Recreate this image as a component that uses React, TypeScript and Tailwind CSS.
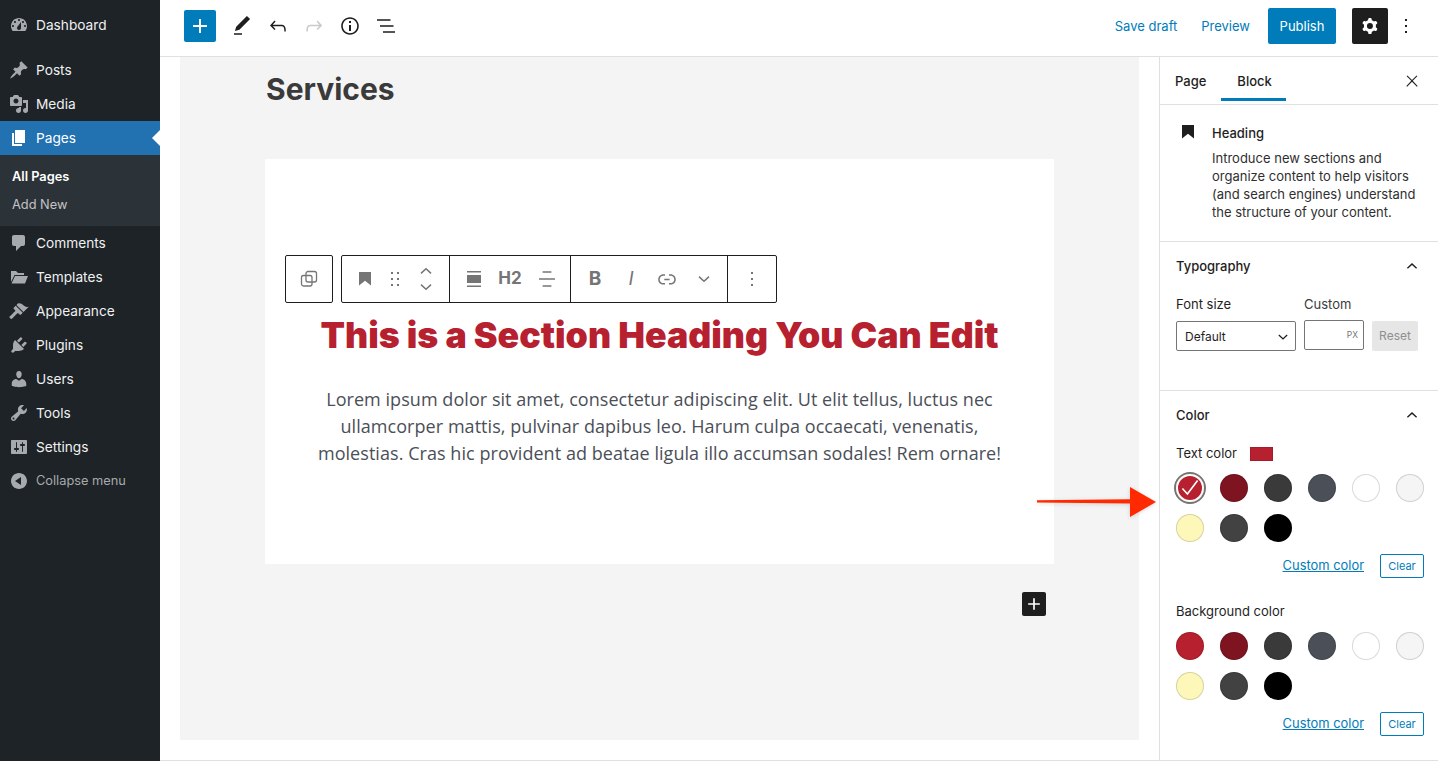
const menuIcons = {
  dashboard: "M3.76 16h12.48c1.1-1.37 1.76-3.11 1.76-5 0-4.42-3.58-8-8-8s-8 3.58-8 8c0 1.89.66 3.63 1.76 5zM10 4c.55 0 1 .45 1 1s-.45 1-1 1-1-.45-1-1 .45-1 1-1zM6 6c.55 0 1 .45 1 1s-.45 1-1 1-1-.45-1-1 .45-1 1-1zm8 0c.55 0 1 .45 1 1s-.45 1-1 1-1-.45-1-1 .45-1 1-1zm-5.37 5.55L12 7v6c0 1.1-.9 2-2 2s-2-.9-2-2c0-.57.24-1.08.63-1.45zM4 10c.55 0 1 .45 1 1s-.45 1-1 1-1-.45-1-1 .45-1 1-1zm12 0c.55 0 1 .45 1 1s-.45 1-1 1-1-.45-1-1 .45-1 1-1z",
  posts: "M10.44 3.02l1.82-1.82 6.36 6.35-1.83 1.82c-1.05-.68-2.48-.57-3.41.36l-.75.75c-.92.93-1.04 2.35-.35 3.41l-1.83 1.82-2.41-2.41-2.8 2.79c-.42.42-3.38 2.71-3.8 2.29s1.86-3.39 2.28-3.81l2.79-2.79L4.1 9.36l1.83-1.82c1.05.69 2.48.57 3.4-.36l.75-.75c.93-.92 1.05-2.35.36-3.41z",
  media: "M13 11V4c0-.55-.45-1-1-1h-1.67L9 1H5L3.67 3H2c-.55 0-1 .45-1 1v7c0 .55.45 1 1 1h10c.55 0 1-.45 1-1zM7 4.5c1.38 0 2.5 1.12 2.5 2.5S8.38 9.5 7 9.5 4.5 8.38 4.5 7 5.62 4.5 7 4.5zM14 6h5v10.5c0 1.38-1.12 2.5-2.5 2.5S14 17.88 14 16.5s1.12-2.5 2.5-2.5c.17 0 .34.02.5.05V9h-3V6zm-4 8.05V13h2v3.5c0 1.38-1.12 2.5-2.5 2.5S7 17.88 7 16.5 8.12 14 9.5 14c.17 0 .34.02.5.05z",
  pages: "M6 15V2h10v13H6zm-1 1h8v2H3V5h2v11z",
  comments: "M5 2h9c1.1 0 2 .9 2 2v7c0 1.1-.9 2-2 2h-2l-5 5v-5H5c-1.1 0-2-.9-2-2V4c0-1.1.9-2 2-2z",
  templates: "M2 4h5l2 2h6v2H5.5L2 15V4zM6 9h13l-3 7.5H2.5L6 9z",
  appearance: "M14.48 11.06L7.41 3.99l1.5-1.5c.5-.56 2.3-.47 3.51.32 1.21.8 1.43 1.28 2.91 2.1 1.18.64 2.45 1.26 4.45.85zm-.71.71L6.7 4.7 4.93 6.47c-.39.39-.39 1.02 0 1.41l1.06 1.06c.39.39.39 1.03 0 1.42-.6.6-5.4 5.4-5.6 5.6-.4.4 1.73 2.53 2.13 2.13.2-.2 5-5 5.6-5.6.39-.39 1.03-.39 1.42 0l1.06 1.06c.39.39 1.02.39 1.41 0z",
  plugins: "M13.11 4.36L9.87 7.6 8 5.73l3.24-3.24c.35-.34 1.05-.2 1.56.32.52.51.66 1.21.31 1.55zm-8 1.77l.91-1.12 9.01 9.01-1.19.84c-.71.71-2.63 1.16-3.82 1.16H6.14L4.9 17.26c-.59.59-1.54.59-2.12 0-.59-.58-.59-1.53 0-2.12l1.24-1.24v-3.88c0-1.13.4-3.19 1.09-3.89zm7.26 3.97l3.24-3.24c.34-.35 1.04-.21 1.55.31.52.51.66 1.21.31 1.55l-3.24 3.25z",
  users: "M10 9.25c-2.27 0-2.73-3.44-2.73-3.44C7 4.02 7.82 2 9.97 2c2.16 0 2.98 2.02 2.71 3.81 0 0-.41 3.44-2.68 3.44zm0 2.57L12.72 10c2.39 0 4.52 2.33 4.52 4.53v2.49s-3.65 1.13-7.24 1.13c-3.65 0-7.24-1.13-7.24-1.13v-2.49c0-2.25 1.94-4.48 4.47-4.48z",
  tools: "M16.68 9.77c-1.34 1.34-3.3 1.67-4.95.99l-5.41 6.52c-.99.99-2.59.99-3.58 0s-.99-2.59 0-3.57l6.52-5.42c-.68-1.65-.35-3.61.99-4.95 1.28-1.28 3.12-1.62 4.72-1.06l-2.89 2.89 2.82 2.82 2.86-2.87c.53 1.58.18 3.39-1.08 4.65zM3.81 16.21c.4.39 1.04.39 1.43 0 .4-.4.4-1.04 0-1.43-.39-.4-1.03-.4-1.43 0-.39.39-.39 1.03 0 1.43z",
  settings: "M18 16V4c0-.55-.45-1-1-1H3c-.55 0-1 .45-1 1v12c0 .55.45 1 1 1h14c.55 0 1-.45 1-1zM8 11h1c.55 0 1 .45 1 1s-.45 1-1 1H8v1.5c0 .28-.22.5-.5.5s-.5-.22-.5-.5V13H6c-.55 0-1-.45-1-1s.45-1 1-1h1V5.5c0-.28.22-.5.5-.5s.5.22.5.5V11zm5-2h-1c-.55 0-1-.45-1-1s.45-1 1-1h1V5.5c0-.28.22-.5.5-.5s.5.22.5.5V7h1c.55 0 1 .45 1 1s-.45 1-1 1h-1v5.5c0 .28-.22.5-.5.5s-.5-.22-.5-.5V9z",
  collapse: "M18 10c0-4.42-3.58-8-8-8s-8 3.58-8 8 3.58 8 8 8 8-3.58 8-8zm-6 4-6-4 6-4v8z",
};

const icons = {
  plus: "M11 5h2v6h6v2h-6v6h-2v-6H5v-2h6z",
  pencil: "M20.1 5.1L16.9 2 6.2 12.7l-1.3 4.4 4.5-1.3L20.1 5.1zM4 20.8h8v-1.5H4v1.5z",
  undo: "M18.3 11.7c-.6-.6-1.4-.9-2.3-.9H6.7l2.9-3.3-1.1-1-4.5 5L8.5 16l1-1-2.7-2.7H16c.5 0 .9.2 1.3.5 1 1 1 3.4 1 4.5v.3h1.5v-.2c0-1.5 0-4.3-1.5-5.7z",
  redo: "M15.6 6.5l-1.1 1 2.9 3.3H8c-.9 0-1.7.3-2.3.9-1.4 1.5-1.4 4.2-1.4 5.6v.2h1.5v-.3c0-1.1 0-3.5 1-4.5.3-.3.7-.5 1.3-.5h9.2L14.5 15l1.1 1.1 4.6-4.6-4.6-5z",
  info: "M12 3.2c-4.8 0-8.8 3.9-8.8 8.8 0 4.8 3.9 8.8 8.8 8.8 4.8 0 8.8-3.9 8.8-8.8 0-4.8-4-8.8-8.8-8.8zm0 16c-4 0-7.2-3.3-7.2-7.2C4.8 8 8 4.8 12 4.8s7.2 3.3 7.2 7.2c0 4-3.2 7.2-7.2 7.2zM11 17h2v-6h-2v6zm0-8h2V7h-2v2z",
  list: "M3 5.2h13.5v1.5H3zM6 11.2h13.5v1.5H6zM9 17.2h12v1.5H9z",
  cog: "M10.289 4.836A1 1 0 0111.275 4h1.306a1 1 0 01.987.836l.244 1.466c.787.26 1.503.679 2.108 1.218l1.393-.522a1 1 0 011.216.437l.653 1.13a1 1 0 01-.23 1.273l-1.148.944a6.025 6.025 0 010 2.435l1.149.946a1 1 0 01.23 1.272l-.653 1.13a1 1 0 01-1.216.437l-1.394-.522c-.605.54-1.32.958-2.108 1.218l-.244 1.466a1 1 0 01-.987.836h-1.306a1 1 0 01-.986-.836l-.244-1.466a5.995 5.995 0 01-2.108-1.218l-1.394.522a1 1 0 01-1.217-.436l-.653-1.131a1 1 0 01.23-1.272l1.149-.946a6.026 6.026 0 010-2.435l-1.148-.944a1 1 0 01-.23-1.272l.653-1.131a1 1 0 011.217-.437l1.393.522a5.994 5.994 0 012.108-1.218l.244-1.466zM14.929 12a3 3 0 11-6 0 3 3 0 016 0z",
  dots: "M13 19h-2v-2h2v2zm0-6h-2v-2h2v2zm0-6h-2V5h2v2z",
  close: "M13 11.8l6.1-6.3-1-1-6.1 6.2-6.1-6.2-1 1 6.1 6.3-6.5 6.7 1 1 6.5-6.6 6.5 6.6 1-1z",
  bookmark: "M6 5v13.6l6-4.75 6 4.75V5H6z",
  drag: "M8 7h2V5H8v2zm0 6h2v-2H8v2zm0 6h2v-2H8v2zm6-14v2h2V5h-2zm0 8h2v-2h-2v2zm0 6h2v-2h-2v2z",
  wide: "M5 4h14v1.5H5zM5 8h14v8H5zM5 18.5h14V20H5z",
  alignCenter: "M16.4 4.2H7.6v1.5h8.8V4.2zM4 11.2v1.5h16v-1.5H4zm3.6 8.6h8.8v-1.5H7.6v1.5z",
  link: "M15.6 7.2H14v1.5h1.6c2 0 3.7 1.7 3.7 3.7s-1.7 3.7-3.7 3.7H14v1.5h1.6c2.8 0 5.2-2.3 5.2-5.2 0-2.9-2.3-5.2-5.2-5.2zM4.7 12.4c0-2 1.7-3.7 3.7-3.7H10V7.2H8.4c-2.9 0-5.2 2.3-5.2 5.2 0 2.9 2.3 5.2 5.2 5.2H10v-1.5H8.4c-2 0-3.7-1.7-3.7-3.7zm4.6.9h5.3v-1.5H9.3v1.5z",
  chevronDown: "M17.5 10.2l-5.5 5-5.5-5 1-1.1 4.5 4.1 4.5-4.1z",
  chevronUp: "M6.5 13.8l5.5-5 5.5 5-1 1.1-4.5-4.1-4.5 4.1z",
};

const Icon = ({ d, className }: { d: string; className: string }) => (
  <svg viewBox="0 0 24 24" fill="currentColor" fillRule="evenodd" className={className}>
    <path d={d} />
  </svg>
);

const MenuItem = ({ icon, label, active }: { icon: string; label: string; active?: boolean }) => (
  <div className={"relative flex h-[34px] items-center pl-[9px] " + (active ? "bg-[#2271b1] text-white" : "text-[#f0f0f1]")}>
    <svg viewBox="0 0 20 20" fill="currentColor" fillRule="evenodd" className={"h-[20px] w-[20px] " + (active ? "text-white" : "text-[#a7aaad]")}>
      <path d={icon} />
    </svg>
    <span className="ml-[7px] text-[13.7px]">{label}</span>
    {active && (
      <span className="absolute right-0 top-1/2 h-0 w-0 -translate-y-1/2 border-y-[8px] border-r-[8px] border-y-transparent border-r-white" />
    )}
  </div>
);

const Sidebar = () => (
  <aside className="flex h-full w-[160px] shrink-0 flex-col bg-[#1d2327] pt-[8px]">
    <MenuItem icon={menuIcons.dashboard} label="Dashboard" />
    <div className="h-[11px]" />
    <MenuItem icon={menuIcons.posts} label="Posts" />
    <MenuItem icon={menuIcons.media} label="Media" />
    <MenuItem icon={menuIcons.pages} label="Pages" active />
    <div className="flex h-[71px] flex-col bg-[#2c3338] pl-[12px] pt-[9px] text-[12.8px]">
      <div className="flex h-[26px] items-center font-semibold text-white">All Pages</div>
      <div className="mt-[2px] flex h-[26px] items-center text-[#c3c4c7]">Add New</div>
    </div>
    <MenuItem icon={menuIcons.comments} label="Comments" />
    <MenuItem icon={menuIcons.templates} label="Templates" />
    <MenuItem icon={menuIcons.appearance} label="Appearance" />
    <MenuItem icon={menuIcons.plugins} label="Plugins" />
    <MenuItem icon={menuIcons.users} label="Users" />
    <MenuItem icon={menuIcons.tools} label="Tools" />
    <MenuItem icon={menuIcons.settings} label="Settings" />
    <div className="flex h-[34px] items-center pl-[9px] text-[#a7aaad]">
      <svg viewBox="0 0 20 20" fill="currentColor" fillRule="evenodd" className="h-[20px] w-[20px]">
        <path d={menuIcons.collapse} />
      </svg>
      <span className="ml-[7px] text-[12.8px]">Collapse menu</span>
    </div>
  </aside>
);

const TopBar = () => (
  <header className="flex h-[57px] shrink-0 items-center border-b border-[#e0e0e0] bg-white pb-[4px] pl-[24px] pr-[20px]">
    <div className="flex h-[32px] w-[32px] items-center justify-center rounded-[2px] bg-[#007cba] text-white">
      <Icon d={icons.plus} className="h-[24px] w-[24px]" />
    </div>
    <Icon d={icons.pencil} className="ml-[14px] h-[24px] w-[24px] text-[#1e1e1e]" />
    <Icon d={icons.undo} className="ml-[12px] h-[24px] w-[24px] text-[#1e1e1e]" />
    <Icon d={icons.redo} className="ml-[12px] h-[24px] w-[24px] text-[#c9c9c9]" />
    <Icon d={icons.info} className="ml-[12px] h-[24px] w-[24px] text-[#1e1e1e]" />
    <Icon d={icons.list} className="ml-[12px] h-[24px] w-[24px] text-[#1e1e1e]" />
    <div className="ml-auto flex items-center text-[13px]">
      <span className="pt-[2px] text-[#007cba]">Save draft</span>
      <span className="ml-[24px] pt-[2px] text-[#007cba]">Preview</span>
      <div className="ml-[18px] flex h-[36px] w-[68px] items-center justify-center rounded-[2px] bg-[#007cba] pt-[2px] text-white">Publish</div>
      <div className="ml-[16px] flex h-[36px] w-[36px] items-center justify-center rounded-[2px] bg-[#1e1e1e] text-white">
        <Icon d={icons.cog} className="h-[24px] w-[24px]" />
      </div>
      <Icon d={icons.dots} className="ml-[6px] h-[24px] w-[24px] text-[#1e1e1e]" />
    </div>
  </header>
);

const ToolBtn = ({ d, className }: { d: string; className?: string }) => (
  <Icon d={d} className={"h-[24px] w-[24px] shrink-0 text-[#757575] " + (className ?? "")} />
);

const BlockToolbar = () => (
  <div className="absolute left-[20px] top-[96px] flex gap-[8px]">
    <div className="flex h-[48px] w-[48px] items-center justify-center rounded-[2px] border border-[#1e1e1e] bg-white text-[#757575]">
      <svg viewBox="0 0 18 18" fill="none" stroke="currentColor" strokeWidth="1.3" className="h-[18px] w-[18px]">
        <rect x="1.5" y="5.5" width="10.5" height="10.5" rx="2" />
        <rect x="6" y="1.5" width="10.5" height="10.5" rx="2" />
      </svg>
    </div>
    <div className="flex h-[48px] w-[436px] rounded-[2px] border border-[#1e1e1e] bg-white">
      <div className="flex w-[108px] items-center border-r border-[#1e1e1e] pl-[11px]">
        <ToolBtn d={icons.bookmark} />
        <ToolBtn d={icons.drag} className="ml-[6px]" />
        <div className="ml-[7px] flex flex-col">
          <ToolBtn d={icons.chevronUp} className="-mb-[4px]" />
          <ToolBtn d={icons.chevronDown} className="-mt-[4px]" />
        </div>
      </div>
      <div className="flex w-[121px] items-center border-r border-[#1e1e1e] pl-[12px]">
        <ToolBtn d={icons.wide} />
        <span className="ml-[12px] w-[24px] text-[17px] font-bold text-[#757575]">H2</span>
        <ToolBtn d={icons.alignCenter} className="ml-[13px]" />
      </div>
      <div className="flex w-[157px] items-center border-r border-[#1e1e1e] pl-[12px] text-[#757575]">
        <span className="w-[24px] text-center text-[19px] font-bold">B</span>
        <span className="ml-[12px] w-[24px] text-center text-[19px] font-normal italic">I</span>
        <ToolBtn d={icons.link} className="ml-[12px]" />
        <ToolBtn d={icons.chevronDown} className="ml-[13px]" />
      </div>
      <div className="flex flex-1 items-center justify-center">
        <ToolBtn d={icons.dots} />
      </div>
    </div>
  </div>
);

const Editor = () => (
  <main className="flex min-w-0 flex-1 flex-col bg-white px-[20px] pb-[20px]">
    <div className="flex-1 bg-[#f4f4f4] px-[85px]">
      <h1 className="pl-[1px] pt-[12px] text-[30px] font-bold leading-[40px] text-[#3a3a3a]">Services</h1>
      <div className="relative mt-[50px] h-[405px] bg-white px-[20px] pt-[154px] text-center">
        <BlockToolbar />
        <h2 className="whitespace-nowrap text-[35.7px] font-black leading-[44px] text-[#b7202e]">
          This is a Section Heading You Can Edit
        </h2>
        <p className="mt-[29px] font-['Open_Sans',sans-serif] text-[18px] leading-[27px] tracking-[0.05px] text-[#4b4f58]">
          Lorem ipsum dolor sit amet, consectetur adipiscing elit. Ut elit tellus, luctus nec
          <br />
          ullamcorper mattis, pulvinar dapibus leo. Harum culpa occaecati, venenatis,
          <br />
          molestias. Cras hic provident ad beatae ligula illo accumsan sodales! Rem ornare!
        </p>
      </div>
      <div className="mt-[28px] flex justify-end pr-[8px]">
        <div className="flex h-[24px] w-[24px] items-center justify-center rounded-[2px] bg-[#1e1e1e] text-white">
          <Icon d={icons.plus} className="h-[20px] w-[20px]" />
        </div>
      </div>
    </div>
  </main>
);

const swatches = ["#b7202e", "#7f1421", "#3a3a3a", "#4b4f58", "#ffffff", "#f5f5f5", "#fdf8b9", "#424242", "#000000"];

const Swatches = ({ selected }: { selected?: boolean }) => (
  <div className="grid w-[264px] grid-cols-[repeat(6,44px)] gap-y-[12px]">
    {swatches.map((c, i) => (
      <div key={c} className="flex h-[28px] w-[28px] items-center justify-center">
        <div className="relative h-[28px] w-[28px] rounded-full border border-black/15" style={{ backgroundColor: c }}>
          {selected && i === 0 && (
            <>
              <span className="absolute -inset-[3px] rounded-full border-2 border-[#757575]" />
              <span className="absolute -inset-[1px] rounded-full border-2 border-white" />
              <svg viewBox="0 0 24 24" fill="none" stroke="white" strokeWidth="1.5" className="absolute inset-0">
                <path d="M5 12.5l4.6 5L19 5" />
              </svg>
            </>
          )}
        </div>
      </div>
    ))}
  </div>
);

const ColorActions = () => (
  <div className="flex items-center justify-end">
    <span className="text-[12.9px] text-[#007cba] underline">Custom color</span>
    <div className="ml-[16px] flex h-[24px] w-[44px] items-center justify-center rounded-[2px] border border-[#007cba] text-[11px] text-[#007cba]">Clear</div>
  </div>
);

const Inspector = () => (
  <aside className="flex w-[279px] shrink-0 flex-col border-l border-[#e0e0e0] bg-white text-[13px] text-[#1e1e1e]">
    <div className="flex h-[48px] shrink-0 items-center border-b border-[#e0e0e0] pl-[15px] pr-[17px]">
      <span className="pt-[2px] font-medium">Page</span>
      <span className="relative ml-[31px] pt-[2px] font-medium">
        Block
        <span className="absolute -left-[16px] -right-[14px] top-[28px] h-[3px] bg-[#007cba]" />
      </span>
      <Icon d={icons.close} className="ml-auto h-[18px] w-[18px]" />
    </div>
    <div className="flex h-[137px] shrink-0 border-b border-[#e0e0e0] pl-[16px] pt-[16px]">
      <Icon d={icons.bookmark} className="-mt-[1px] h-[24px] w-[24px]" />
      <div className="ml-[12px] w-[216px]">
        <div className="font-medium leading-[24px]">Heading</div>
        <p className="mt-[4px] leading-[18px] text-[#2f2f2f]">
          Introduce new sections and organize content to help visitors (and search engines) understand the structure of your content.
        </p>
      </div>
    </div>
    <div className="h-[149px] shrink-0 border-b border-[#e0e0e0] px-[16px] pt-[16px]">
      <div className="flex h-[18px] items-center justify-between">
        <span className="font-medium">Typography</span>
        <Icon d={icons.chevronUp} className="-mr-[1px] -mt-[2px] h-[22px] w-[22px]" />
      </div>
      <div className="mt-[19px] flex">
        <div className="w-[120px]">
          <div className="leading-[18px]">Font size</div>
          <div className="mt-[8px] flex h-[30px] items-center justify-between rounded-[2px] border border-[#757575] pl-[8px] pr-[2px] pt-[1px] text-[12px]">
            Default
            <Icon d={icons.chevronDown} className="h-[20px] w-[20px]" />
          </div>
        </div>
        <div className="ml-[8px] w-[60px]">
          <div className="leading-[18px] text-[#3c3c3c]">Custom</div>
          <div className="mt-[7px] flex h-[30px] items-center justify-end rounded-[2px] border border-[#757575] pr-[5px] text-[8.5px] text-[#757575]">PX</div>
        </div>
        <div className="ml-[8px] mt-[26px] flex h-[30px] w-[46px] items-center justify-center rounded-[2px] bg-[#e6e6e6] text-[12px] text-[#8f8f8f]">Reset</div>
      </div>
    </div>
    <div className="pl-[16px] pr-[14px] pt-[16px]">
      <div className="flex h-[18px] items-center justify-between pr-[2px]">
        <span className="font-medium">Color</span>
        <Icon d={icons.chevronUp} className="-mr-[1px] -mt-[2px] h-[22px] w-[22px]" />
      </div>
      <div className="mt-[20px] flex h-[18px] items-center">
        Text color
        <span className="ml-[13px] h-[14px] w-[23px] border border-black/10 bg-[#b7202e]" />
      </div>
      <div className="mt-[11px]">
        <Swatches selected />
      </div>
      <div className="mt-[12px]">
        <ColorActions />
      </div>
      <div className="mt-[24px] leading-[18px]">Background color</div>
      <div className="mt-[12px]">
        <Swatches />
      </div>
      <div className="mt-[12px]">
        <ColorActions />
      </div>
    </div>
  </aside>
);

export default function App() {
  return (
    <div className="flex h-[761px] w-full overflow-hidden bg-white font-['Inter',sans-serif]">
      <Sidebar />
      <div className="relative flex min-w-0 flex-1 flex-col">
        <TopBar />
        <div className="flex min-h-0 flex-1 border-b border-[#e0e0e0]">
          <Editor />
          <Inspector />
        </div>
        {/* red annotation arrow */}
        <svg viewBox="0 0 122 32" className="absolute left-[876px] top-[486px] h-[32px] w-[122px] drop-shadow-sm">
          <path d="M1 14.2l93-1V1l26 15-26 15V17.5L1 16.4z" fill="#ff2a00" />
        </svg>
      </div>
    </div>
  );
}
